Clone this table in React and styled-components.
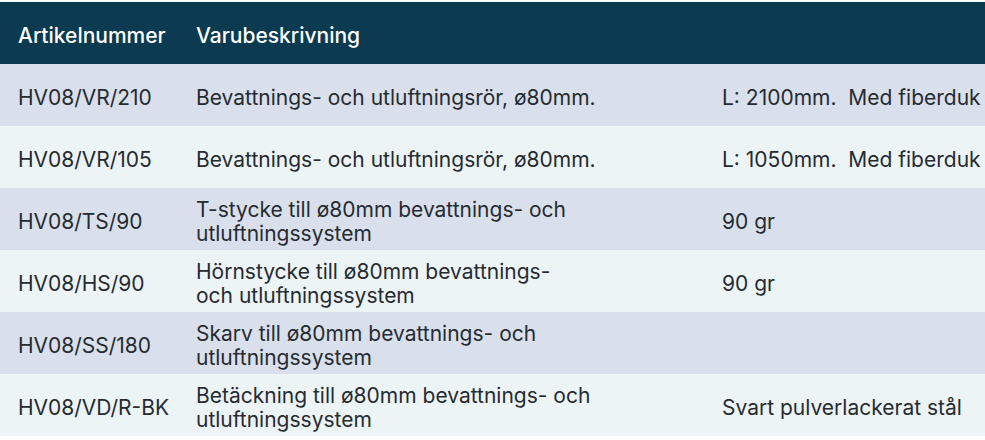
import React from 'react';
import styled, { createGlobalStyle } from 'styled-components';

const GlobalStyle = createGlobalStyle`
  html, body {
    margin: 0;
    padding: 0;
    background: #ffffff;
  }
  body {
    font-family: Inter, "Noto Sans", "Liberation Sans", sans-serif;
    color: #262b31;
  }
`;

const rows = [
  { code: 'HV08/VR/210', desc: ['Bevattnings- och utluftningsrör, ø80mm.'], info: 'L: 2100mm.  Med fiberduk' },
  { code: 'HV08/VR/105', desc: ['Bevattnings- och utluftningsrör, ø80mm.'], info: 'L: 1050mm.  Med fiberduk' },
  { code: 'HV08/TS/90', desc: ['T-stycke till ø80mm bevattnings- och', 'utluftningssystem'], info: '90 gr' },
  { code: 'HV08/HS/90', desc: ['Hörnstycke till ø80mm bevattnings-', 'och utluftningssystem'], info: '90 gr' },
  { code: 'HV08/SS/180', desc: ['Skarv till ø80mm bevattnings- och', 'utluftningssystem'], info: '' },
  { code: 'HV08/VD/R-BK', desc: ['Betäckning till ø80mm bevattnings- och', 'utluftningssystem'], info: 'Svart pulverlackerat stål' },
];

const Table = styled.table`
  width: 985px;
  margin-top: 2px;
  border-collapse: collapse;
  table-layout: fixed;
  font-size: 21px;
  line-height: 24px;
`;

const HeadRow = styled.tr`
  background: #0b3a51;
  color: #ffffff;
  height: 62px;
`;

const HeadCell = styled.th`
  text-align: left;
  font-weight: 500;
  vertical-align: middle;
  padding: 6px 0 0 ${p => p.$pad || 0}px;
  white-space: nowrap;
`;

const BodyRow = styled.tr`
  height: 62px;
  background: ${p => (p.$odd ? '#d9e0eb' : '#edf4f6')};
`;

const Cell = styled.td`
  vertical-align: middle;
  padding: 6px 0 0 ${p => p.$pad || 0}px;
  white-space: pre;
  font-weight: 400;
`;

const Line = styled.div`
  white-space: nowrap;
`;

export default function App() {
  return (
    <>
      <GlobalStyle />
      <Table>
        <colgroup>
          <col style={{ width: 196 }} />
          <col style={{ width: 526 }} />
          <col />
        </colgroup>
        <thead>
          <HeadRow>
            <HeadCell $pad={18}>Artikelnummer</HeadCell>
            <HeadCell>Varubeskrivning</HeadCell>
            <HeadCell />
          </HeadRow>
        </thead>
        <tbody>
          {rows.map((r, i) => (
            <BodyRow key={r.code} $odd={i % 2 === 0}>
              <Cell $pad={18}>{r.code}</Cell>
              <Cell>
                {r.desc.map(l => (
                  <Line key={l}>{l}</Line>
                ))}
              </Cell>
              <Cell>{r.info}</Cell>
            </BodyRow>
          ))}
        </tbody>
      </Table>
    </>
  );
}
